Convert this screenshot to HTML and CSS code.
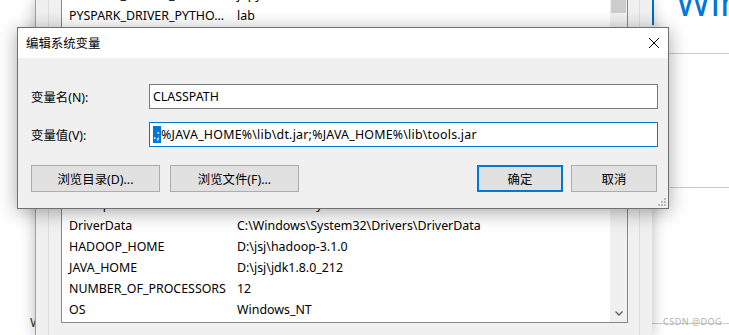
FILE: index.html
```html
<!DOCTYPE html>
<html lang="zh-CN">
<head>
    <meta charset="utf-8">
    <title>编辑系统变量</title>
    <link rel="stylesheet" href="styles.css">
</head>
<body>
    <div class="desktop">
        <div class="left-strip"><span class="peek">W</span></div>

        <!-- environment variables window behind the dialog -->
        <div class="env-window">
            <div class="group">
                <div class="var-list">
                    <div class="rows">
                        <div class="row"><span class="name">PYSPARK_DRIVER_PYTHON</span><span>jupyter</span></div>
                        <div class="row"><span class="name">PYSPARK_DRIVER_PYTHO...</span><span>lab</span></div>
                        <div class="row"><span class="name">PYSPARK_PYTHON</span><span>python</span></div>
                        <div class="row"><span class="name">TEMP</span><span>C:\Windows\TEMP</span></div>
                        <div class="row"><span class="name">TMP</span><span>C:\Windows\TEMP</span></div>
                        <div class="row"><span class="name">USERNAME</span><span>SYSTEM</span></div>
                        <div class="row"><span class="name">windir</span><span>C:\Windows</span></div>
                        <div class="row"><span class="name">ZES_ENABLE_SYSMAN</span><span>1</span></div>
                        <div class="row"><span class="name">CLASSPATH</span><span>.;%JAVA_HOME%\lib\dt.jar;%JAVA_HOME%\lib\tools.jar</span></div>
                        <div class="row"><span class="name">CLASSPATH</span><span>.;%JAVA_HOME%\lib</span></div>
                        <div class="row"><span class="name">ComSpec</span><span>C:\Windows\system32\cmd.exe</span></div>
                        <div class="row"><span class="name">DriverData</span><span>C:\Windows\System32\Drivers\DriverData</span></div>
                        <div class="row"><span class="name">HADOOP_HOME</span><span>D:\jsj\hadoop-3.1.0</span></div>
                        <div class="row"><span class="name">JAVA_HOME</span><span>D:\jsj\jdk1.8.0_212</span></div>
                        <div class="row"><span class="name">NUMBER_OF_PROCESSORS</span><span>12</span></div>
                        <div class="row"><span class="name">OS</span><span>Windows_NT</span></div>
                    </div>
                    <div class="scrollbar">
                        <div class="thumb"></div>
                        <div class="track"></div>
                        <div class="scroll-down">
                            <svg width="8" height="5" viewBox="0 0 8 5"><path d="M0.5 0.5L4 4L7.5 0.5" fill="none" stroke="#606060" stroke-width="1.3"/></svg>
                        </div>
                    </div>
                </div>
            </div>
        </div>

        <!-- settings window on the right -->
        <div class="settings">
            <div class="settings-head">
                <span class="accent"></span>
                <span class="heading">Windows</span>
            </div>
            <div class="rule"></div>
            <div class="gap-a"></div>
            <div class="rule rule-b"></div>
            <div class="gap-b"></div>
            <div class="rule rule-full"></div>
        </div>
    </div>

    <div class="dialog">
        <div class="title-bar">
            <span class="title">编辑系统变量</span>
            <svg class="close" width="10" height="10" viewBox="0 0 10 10"><path d="M0 0L10 10M10 0L0 10" stroke="#000" stroke-width="1"/></svg>
        </div>
        <div class="dialog-body">
            <div class="field">
                <label class="field-label">变量名(N):</label>
                <div class="input">CLASSPATH</div>
            </div>
            <div class="field field-second">
                <label class="field-label">变量值(V):</label>
                <div class="input input-focus"><span class="selected">.;</span>%JAVA_HOME%\lib\dt.jar;%JAVA_HOME%\lib\tools.jar</div>
            </div>
            <div class="buttons">
                <button class="btn btn-wide">浏览目录(D)...</button>
                <button class="btn btn-wide">浏览文件(F)...</button>
                <button class="btn btn-default">确定</button>
                <button class="btn btn-last">取消</button>
            </div>
        </div>
        <svg class="grip" width="10" height="10" viewBox="0 0 10 10">
            <rect x="7" y="1" width="2" height="2" fill="#bcbcbc"/>
            <rect x="4" y="4" width="2" height="2" fill="#bcbcbc"/>
            <rect x="7" y="4" width="2" height="2" fill="#bcbcbc"/>
            <rect x="1" y="7" width="2" height="2" fill="#bcbcbc"/>
            <rect x="4" y="7" width="2" height="2" fill="#bcbcbc"/>
            <rect x="7" y="7" width="2" height="2" fill="#bcbcbc"/>
        </svg>
    </div>

    <div class="watermark">CSDN @DOG</div>
</body>
</html>
```

FILE: styles.css
```css
* {
    box-sizing: border-box;
}

body {
    margin: 0;
    width: 729px;
    height: 335px;
    overflow: hidden;
    position: relative;
    background: #ffffff;
    font-family: "Noto Sans", "Noto Sans CJK SC", sans-serif;
    font-size: 12.4px;
    color: #000000;
}

.desktop {
    display: flex;
    height: 335px;
}

/* white strip on the far left */

.left-strip {
    width: 35px;
    flex: none;
    display: flex;
    flex-direction: column;
    justify-content: flex-end;
    padding-bottom: 4px;
}

.peek {
    align-self: flex-end;
    margin-right: -7px;
    font-size: 13px;
    line-height: 18px;
    color: #333333;
}

/* environment variables window */

.env-window {
    width: 617px;
    flex: none;
    z-index: 1;
    background: #f0f0f0;
    border-left: 1px solid #a0a0a0;
    padding: 0 12px;
    box-shadow: 0 0 14px rgba(0, 0, 0, 0.28);
}

.group {
    height: 400px;
    margin-top: -30px;
    padding: 13px 11px 0 12px;
    border-left: 1px solid #dcdcdc;
    border-right: 1px solid #dcdcdc;
}

.var-list {
    display: flex;
    height: 340px;
    background: #ffffff;
    border: 1px solid #828790;
    overflow: hidden;
}

.rows {
    flex: 1;
}

.row {
    display: flex;
    align-items: center;
    height: 21px;
    padding-left: 7px;
    white-space: nowrap;
}

.name {
    width: 168px;
    flex: none;
}

.scrollbar {
    width: 17px;
    flex: none;
    display: flex;
    flex-direction: column;
    background: #f0f0f0;
}

.thumb {
    height: 29px;
    margin: 0 1px;
    background: #cdcdcd;
}

.track {
    flex: 1;
}

.scroll-down {
    height: 17px;
    display: flex;
    align-items: center;
    justify-content: center;
}

/* settings window on the right */

.settings {
    width: 77px;
    flex: none;
    display: flex;
    flex-direction: column;
    background: #ffffff;
}

.settings-head {
    height: 53px;
    display: flex;
    align-items: flex-start;
    overflow: hidden;
}

.accent {
    width: 2px;
    height: 25px;
    flex: none;
    background: #0078d7;
}

.heading {
    margin: -17px 0 0 22px;
    font-size: 37px;
    line-height: 38px;
    color: #0078d7;
    white-space: nowrap;
}

.rule {
    height: 1px;
    margin-left: 16px;
    background: #cccccc;
}

.rule-b {
    margin-left: 18px;
}

.rule-full {
    margin-left: 0;
}

.gap-a {
    height: 133px;
}

.gap-b {
    height: 135px;
}

/* edit dialog */

.dialog {
    position: absolute;
    left: 17px;
    top: 27px;
    width: 652px;
    height: 182px;
    display: flex;
    flex-direction: column;
    border: 1px solid #707070;
    background: #f0f0f0;
    box-shadow: 0 3px 18px rgba(0, 0, 0, 0.35);
    z-index: 2;
}

.title-bar {
    height: 30px;
    flex: none;
    display: flex;
    align-items: center;
    justify-content: space-between;
    padding-left: 8px;
    background: #ffffff;
}

.close {
    margin-right: 9px;
}

.dialog-body {
    flex: 1;
    display: flex;
    flex-direction: column;
    padding: 26px 10px 0 13px;
}

.field {
    display: flex;
    align-items: center;
}

.field-second {
    margin-top: 13px;
}

.field-label {
    width: 118px;
    flex: none;
}

.input {
    flex: 1;
    height: 25px;
    display: flex;
    align-items: center;
    padding-left: 3px;
    background: #ffffff;
    border: 1px solid #7a7a7a;
    white-space: nowrap;
}

.input-focus {
    border-color: #0078d7;
    letter-spacing: 0.22px;
}

.selected {
    padding-right: 1px;
    background: #0078d7;
    color: #ffffff;
}

.buttons {
    display: flex;
    margin-top: 18px;
}

.btn {
    height: 27px;
    width: 86px;
    padding: 0;
    font: inherit;
    color: #000000;
    background: #e1e1e1;
    border: 1px solid #adadad;
}

.btn-wide {
    width: 129px;
    margin-right: 10px;
}

.btn-default {
    margin-left: auto;
    margin-right: 8px;
    border: 2px solid #0078d7;
}

.btn-last {
    margin-right: 1px;
}

.grip {
    position: absolute;
    right: 1px;
    bottom: 1px;
}

.watermark {
    position: absolute;
    left: 663px;
    top: 315px;
    font-size: 9px;
    color: #b0b0b0;
    letter-spacing: 0.5px;
    z-index: 3;
}
```
